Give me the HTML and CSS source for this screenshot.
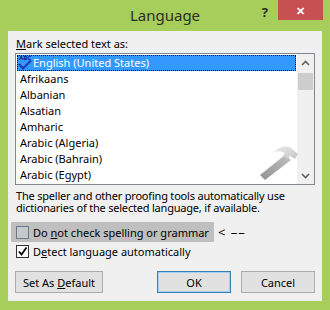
FILE: index.html
```html
<!DOCTYPE html>
<html lang="en">
<head>
    <meta charset="UTF-8">
    <title>Language</title>
    <link rel="stylesheet" href="styles.css">
</head>
<body>
    <div class="window">
        <div class="titlebar">
            <div></div>
            <div class="title">Language</div>
            <div class="controls">
                <span class="help">?</span>
                <span class="close">&#x2715;</span>
            </div>
        </div>

        <div class="panel">
            <div class="label"><u>M</u>ark selected text as:</div>

            <div class="listbox">
                <div class="rows">
                    <div class="row selected">
                        <span class="spell-icon">
                            <span class="abc">ABC</span>
                            <svg width="14" height="11" viewBox="0 0 14 11"><path d="M1 5 L5 9.5 L13 1.5" fill="none" stroke="#1a3fb0" stroke-width="2.2"/></svg>
                        </span>
                        <span>English (United States)</span>
                    </div>
                    <div class="row">Afrikaans</div>
                    <div class="row">Albanian</div>
                    <div class="row">Alsatian</div>
                    <div class="row">Amharic</div>
                    <div class="row">Arabic (Algeria)</div>
                    <div class="row">Arabic (Bahrain)</div>
                    <div class="row">Arabic (Egypt)</div>
                </div>
                <div class="scrollbar">
                    <div class="arrow"><svg width="9" height="6" viewBox="0 0 9 6"><path d="M1 5 L4.5 1.5 L8 5" fill="none" stroke="#606060" stroke-width="1.6"/></svg></div>
                    <div class="thumb"></div>
                    <div class="track"></div>
                    <div class="arrow"><svg width="9" height="6" viewBox="0 0 9 6"><path d="M1 1 L4.5 4.5 L8 1" fill="none" stroke="#606060" stroke-width="1.6"/></svg></div>
                </div>
                <!-- watermark hammer -->
                <svg class="hammer" width="45" height="40" viewBox="0 0 45 40">
                    <defs>
                        <linearGradient id="handle" x1="1" y1="0" x2="0" y2="1">
                            <stop offset="0" stop-color="#b5b5b5"/>
                            <stop offset="1" stop-color="#7f7f7f"/>
                        </linearGradient>
                        <linearGradient id="head" x1="0" y1="0" x2="1" y2="1">
                            <stop offset="0" stop-color="#e6e6e6"/>
                            <stop offset="1" stop-color="#bcbcbc"/>
                        </linearGradient>
                    </defs>
                    <path d="M29 13 L35 18 L9 38 L4 33 Z" fill="url(#handle)"/>
                    <path d="M18 10 C22 5 30 3 35 6 L42 12 L39 17 L34 14 L31 17 L27 13 L29 11 C25 9 22 9 18 10 Z" fill="url(#head)"/>
                </svg>
            </div>

            <p class="note">The speller and other proofing tools automatically use dictionaries of the selected language, if available.</p>

            <div class="check-line">
                <label class="check highlighted">
                    <span class="box"></span>
                    <span>Do <u>n</u>ot check spelling or grammar</span>
                </label>
                <span class="pointer">&lt; &ndash;&ndash;</span>
            </div>
            <label class="check">
                <span class="box checked"><svg width="11" height="11" viewBox="0 0 11 11"><path d="M2 5.5 L4.5 8.5 L9.5 1.5" fill="none" stroke="#000" stroke-width="1.8"/></svg></span>
                <span>D<u>e</u>tect language automatically</span>
            </label>

            <div class="buttons">
                <button class="btn wide">Set As <u>D</u>efault</button>
                <button class="btn default">OK</button>
                <button class="btn">Cancel</button>
            </div>
        </div>
    </div>
</body>
</html>
```

FILE: styles.css
```css
body {
    margin: 0;
    background: #a7cd5b;
    font-family: 'Segoe UI', 'Noto Sans', sans-serif;
    font-size: 11px;
    color: #000;
}

.window {
    width: 330px;
    height: 310px;
    display: flex;
    flex-direction: column;
}

.titlebar {
    height: 31px;
    flex-shrink: 0;
    display: grid;
    grid-template-columns: 1fr auto 1fr;
}

.title {
    font-size: 15px;
    color: #2a2f22;
    padding-top: 5px;
}

.controls {
    justify-self: end;
    display: flex;
    align-items: flex-start;
    margin-right: 7px;
}

.help {
    font-weight: bold;
    font-size: 13px;
    color: #2a2f22;
    margin-right: 10px;
    padding-top: 3px;
}

.close {
    width: 45px;
    height: 20px;
    background: #c75050;
    color: white;
    font-size: 11px;
    font-weight: bold;
    display: flex;
    align-items: center;
    justify-content: center;
}

.panel {
    flex: 1;
    margin: 0 8px 9px;
    background: #f0f0f0;
    padding: 5px 7px 0;
}

.label {
    line-height: 16px;
    margin-bottom: 1px;
    padding-left: 1px;
}

.listbox {
    position: relative;
    height: 130px;
    border: 1px solid #828790;
    background: white;
    display: flex;
    overflow: hidden;
}

.rows {
    flex: 1;
    padding: 1px;
}

.row {
    height: 16px;
    line-height: 16px;
    padding-left: 3px;
    white-space: nowrap;
}

.row.selected {
    background: #3399ff;
    color: white;
    outline: 1px dotted #000;
    outline-offset: -1px;
    display: flex;
    align-items: center;
    padding-left: 0;
}

.spell-icon {
    position: relative;
    width: 16px;
    height: 16px;
    flex-shrink: 0;
}

.spell-icon .abc {
    position: absolute;
    left: 2px;
    top: 0;
    font-size: 6px;
    line-height: 6px;
    font-weight: bold;
    color: #10206a;
}

.spell-icon svg {
    position: absolute;
    left: 1px;
    top: 4px;
}

.scrollbar {
    width: 17px;
    background: #f0f0f0;
    display: flex;
    flex-direction: column;
}

.arrow {
    height: 17px;
    display: flex;
    align-items: center;
    justify-content: center;
}

.thumb {
    height: 17px;
    margin: 2px 1px 0;
    background: #cdcdcd;
}

.track {
    flex: 1;
}

.hammer {
    position: absolute;
    left: 240px;
    top: 88px;
    opacity: 0.85;
}

.note {
    margin: 5px 0 0;
    line-height: 12px;
    padding-left: 1px;
    letter-spacing: -0.2px;
}

.check-line {
    display: flex;
    align-items: center;
    margin-top: 8px;
}

.check {
    display: flex;
    align-items: center;
    gap: 4px;
    height: 16px;
    margin-top: 1px;
    padding-left: 1px;
}

.check.highlighted {
    height: 20px;
    width: 198px;
    margin: 0 0 0 -4px;
    padding-left: 5px;
    background: #bfbfbf;
}

.box {
    width: 11px;
    height: 11px;
    border: 1px solid #333;
    background: white;
    display: flex;
    align-items: center;
    justify-content: center;
}

.highlighted .box {
    border-color: #6a7a8c;
    background: #c6c9cc;
}

.pointer {
    margin-left: 4px;
    font-size: 13px;
    letter-spacing: 1px;
}

.buttons {
    display: flex;
    gap: 10px;
    margin-top: 12px;
}

.btn {
    height: 22px;
    width: 74px;
    border: 1px solid #acacac;
    background: #e1e1e1;
    font-family: inherit;
    font-size: 11px;
    padding: 0;
    color: #000;
}

.btn.wide {
    width: 88px;
    margin-right: auto;
}

.btn.default {
    border-color: #3c7fb1;
    box-shadow: inset 0 0 0 1px #a6cff0;
}
```
